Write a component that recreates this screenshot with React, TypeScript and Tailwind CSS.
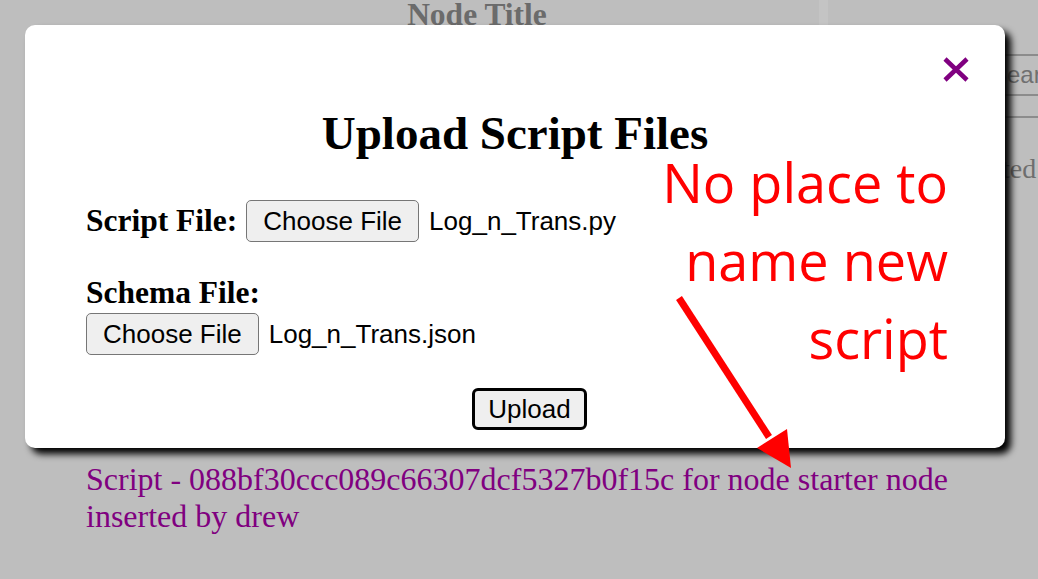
import React from "react"

const serif = "font-['Liberation_Serif','Times_New_Roman',serif]"
const sans = "font-['Liberation_Sans',Arial,sans-serif]"

function FileInput({ name }: { name: string }) {
  return (
    <div className="flex items-center">
      <button className="flex h-[42px] items-center rounded-[5px] border-[1.5px] border-[#767676] bg-[#efefef] px-[16px] text-[26px] leading-[30px] text-black">
        Choose File
      </button>
      <span className="ml-[10px] text-[26px] leading-[30px] text-black">{name}</span>
    </div>
  )
}

function UploadModal() {
  return (
    <div className="absolute left-[25px] top-[25px] h-[423px] w-[980px] rounded-[10px] bg-white shadow-[6px_6px_7px_#000]">
      <button className="absolute right-[35px] top-[32px] h-[25px] w-[28px]" aria-label="close">
        <svg viewBox="0 0 28 25" className="h-full w-full">
          <path d="M3 2 L25 23 M25 2 L3 23" stroke="#800080" strokeWidth="4.5" />
        </svg>
      </button>
      <h1 className={`${serif} pt-[81px] text-center text-[47px] font-bold leading-[54px] text-black`}>
        Upload Script Files
      </h1>
      <form className={`${sans} mt-[40px] pl-[61px] pr-[32px]`}>
        <div className="flex items-center gap-[9px]">
          <label className={`${serif} text-[31.5px] font-bold leading-[36px]`}>Script File:</label>
          <FileInput name="Log_n_Trans.py" />
        </div>
        <label className={`${serif} mt-[33px] block text-[31.5px] font-bold leading-[36px]`}>Schema File:</label>
        <div className="mt-[2px]">
          <FileInput name="Log_n_Trans.json" />
        </div>
        <div className="mt-[33px] flex justify-center">
          <button
            type="button"
            className="flex h-[42px] items-center rounded-[6px] border-[3px] border-black bg-[#efefef] px-[13px] text-[26px] leading-[30px] text-black"
          >
            Upload
          </button>
        </div>
      </form>
    </div>
  )
}

function Annotation() {
  return (
    <>
      <div className="absolute right-[90px] top-[143px] text-right font-['Open_Sans',sans-serif] text-[54px] leading-[78px] text-[#ff0000]">
        <div>No place to</div>
        <div>name new</div>
        <div>script</div>
      </div>
      <svg className="absolute inset-0 h-full w-full" viewBox="0 0 1038 579">
        <line x1="679" y1="298" x2="769" y2="437" stroke="#ff0000" strokeWidth="7" />
        <polygon points="757,448 787,429 791,468" fill="#ff0000" />
      </svg>
    </>
  )
}

export default function App() {
  return (
    <div className="relative h-[579px] w-[1038px] overflow-hidden bg-[#bebebe]">
      <div className="flex h-full items-start">
        <div className="w-[819px] shrink-0">
          <h2 className={`${serif} -mt-[3px] pl-[135px] text-center text-[31.5px] font-bold leading-[36px] text-[#6b6b6b]`}>
            Node Title
          </h2>
          <p className={`${serif} mt-[428px] w-[960px] pl-[86px] text-[32px] leading-[37px] text-[#800080]`}>
            Script - 088bf30ccc089c66307dcf5327b0f15c for node starter node inserted by drew
          </p>
        </div>
        <div className="h-[440px] w-[9px] shrink-0 bg-[#c4c4c4]" />
        <div className="flex-1">
          <div className={`${sans} mt-[54px] flex h-[42px] items-center border-y-2 border-[#8c8c8c] pl-[163px] text-[24px] text-[#707070] whitespace-nowrap`}>
            Search
          </div>
          <div className="mt-[20px] border-t-2 border-[#8c8c8c]" />
          <div className={`${serif} mt-[33px] pl-[118px] text-[28px] leading-[36px] text-[#6e6e6e] whitespace-nowrap`}>
            Inserted
          </div>
        </div>
      </div>
      <UploadModal />
      <Annotation />
    </div>
  )
}
